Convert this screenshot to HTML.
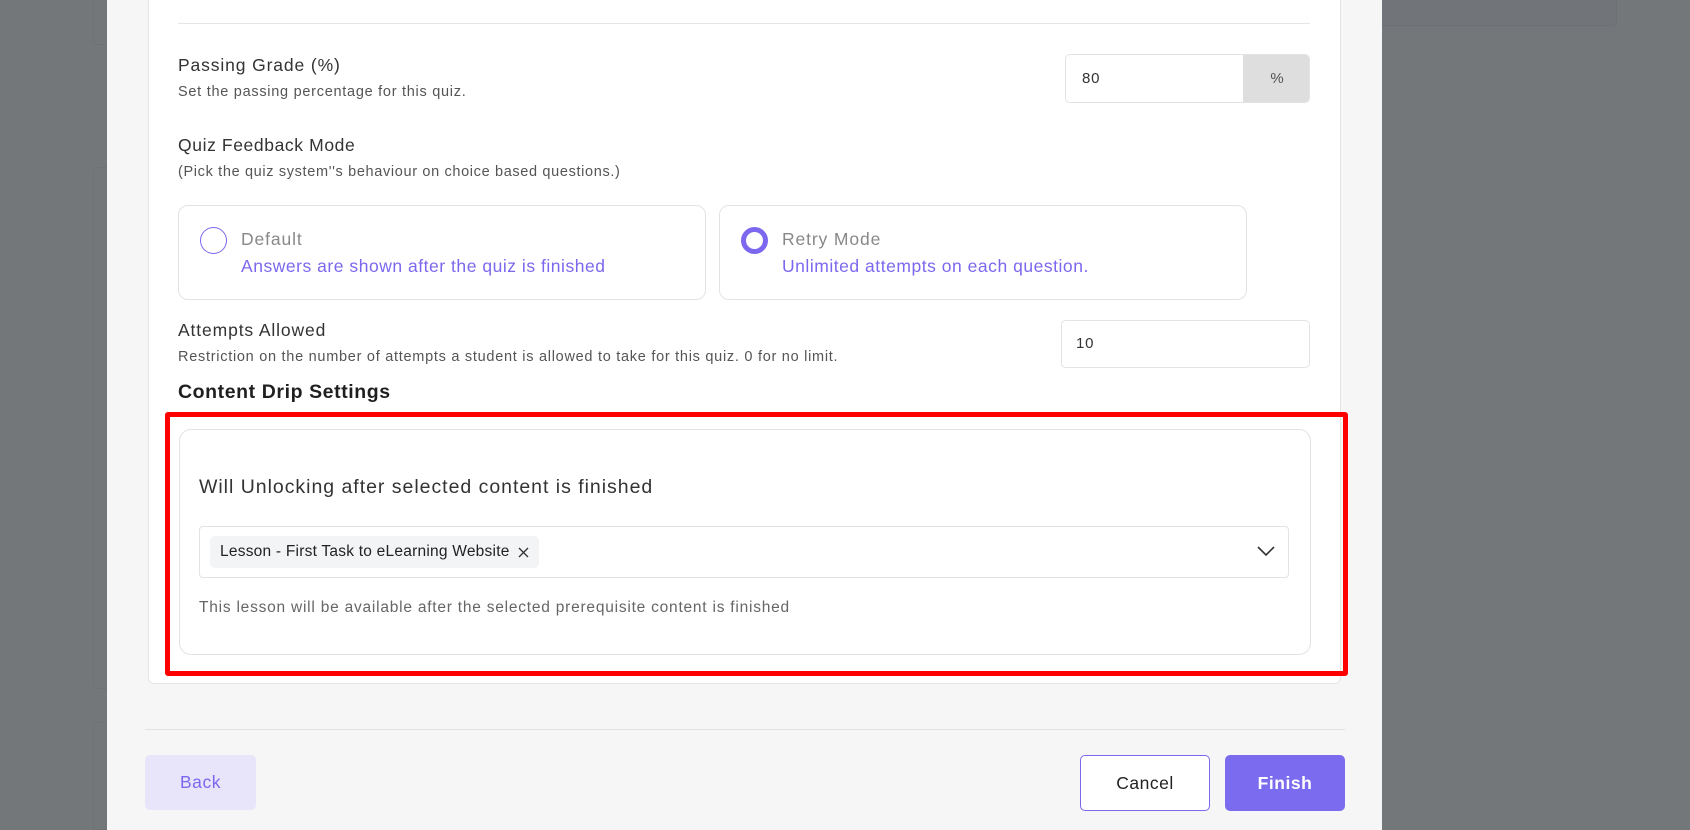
<!DOCTYPE html>
<html><head><meta charset="utf-8">
<style>
*{box-sizing:border-box;margin:0;padding:0}
html,body{width:1690px;height:830px;overflow:hidden}
body{background:#74777a;font-family:"Liberation Sans",sans-serif;position:relative;color:#1f2937}
.abs{position:absolute}
.modal{left:107px;top:0;width:1275px;height:830px;background:#f6f6f6}
.card{left:148px;top:-10px;width:1193px;height:694px;background:#fff;border:1px solid #e5e5e5;border-radius:6px}
.t{position:absolute;white-space:nowrap;letter-spacing:0.05em}
.h{font-size:17.5px;color:#333}
.s{font-size:14.5px;color:#555}
.inp{position:absolute;border:1px solid #e3e3e3;border-radius:5px;background:#fff;font-size:15px;color:#333}
.rc{position:absolute;border:1px solid #e3e3e3;border-radius:10px;background:#fff}
.btn{position:absolute;border-radius:5px;font-size:17.5px;display:flex;align-items:center;justify-content:center;letter-spacing:0.03em}
</style></head><body>
<div class="abs" style="left:93px;top:-5px;width:30px;height:50px;border:1px solid #6f7275;border-radius:4px"></div>
<div class="abs" style="left:93px;top:167px;width:30px;height:522px;border:1px solid #6f7275;border-radius:4px"></div>
<div class="abs" style="left:93px;top:722px;width:30px;height:108px;border:1px solid #6f7275;border-radius:4px 4px 0 0"></div>
<div class="abs" style="left:1370px;top:-5px;width:247px;height:31px;background:#717478;border:1px solid #6d7074;border-radius:4px"></div>
<div class="abs modal"></div>
<div class="abs card"></div>
<div class="abs" style="left:178px;top:23px;width:1132px;height:1px;background:#e5e5e5"></div>

<div class="t h" style="left:178px;top:55px">Passing Grade (%)</div>
<div class="t s" style="left:178px;top:84px">Set the passing percentage for this quiz.</div>
<div class="inp" style="left:1065px;top:54px;width:245px;height:49px;overflow:hidden">
  <span class="t" style="left:16px;top:15px">80</span>
  <div class="abs" style="left:177px;top:0;width:68px;height:49px;background:#dedede;text-align:center;line-height:47px;color:#555">%</div>
</div>

<div class="t h" style="left:178px;top:135px;letter-spacing:0.035em">Quiz Feedback Mode</div>
<div class="t s" style="left:178px;top:164px;letter-spacing:0.045em">(Pick the quiz system''s behaviour on choice based questions.)</div>

<div class="rc" style="left:178px;top:205px;width:528px;height:95px">
  <div class="abs" style="left:21px;top:21px;width:27px;height:27px;border:1.5px solid #7b68ee;border-radius:50%"></div>
  <div class="t" style="left:62px;top:23px;font-size:17.5px;color:#888">Default</div>
  <div class="t" style="left:62px;top:50px;font-size:17.5px;color:#7b68ee;letter-spacing:0.03em">Answers are shown after the quiz is finished</div>
</div>
<div class="rc" style="left:719px;top:205px;width:528px;height:95px">
  <div class="abs" style="left:21px;top:21px;width:27px;height:27px;border:5px solid #7b68ee;border-radius:50%"></div>
  <div class="t" style="left:62px;top:23px;font-size:17.5px;color:#888">Retry Mode</div>
  <div class="t" style="left:62px;top:50px;font-size:17.5px;color:#7b68ee;letter-spacing:0.03em">Unlimited attempts on each question.</div>
</div>

<div class="t h" style="left:178px;top:320px">Attempts Allowed</div>
<div class="t s" style="left:178px;top:349px">Restriction on the number of attempts a student is allowed to take for this quiz. 0 for no limit.</div>
<div class="inp" style="left:1061px;top:320px;width:249px;height:48px"><span class="t" style="left:14px;top:14px">10</span></div>

<div class="t" style="left:178px;top:381px;font-size:19.5px;color:#1f1f1f;font-weight:600;letter-spacing:0.03em">Content Drip Settings</div>

<div class="abs" style="left:165px;top:412px;width:1183px;height:264px;border:5px solid #ff0000;border-radius:3px"></div>
<div class="abs" style="left:179px;top:429px;width:1132px;height:226px;border:1px solid #e3e3e3;border-radius:12px;background:#fff"></div>
<div class="t" style="left:199px;top:476px;font-size:19.5px;color:#333">Will Unlocking after selected content is finished</div>
<div class="abs" style="left:199px;top:526px;width:1090px;height:52px;border:1px solid #e3e3e3;border-radius:4px;background:#fff"></div>
<div class="abs" style="left:210px;top:536px;width:329px;height:32px;background:#f3f4f6;border-radius:5px"></div>
<div class="t" style="left:220px;top:543px;font-size:15.5px;color:#222;letter-spacing:0.015em">Lesson - First Task to eLearning Website</div>
<svg class="abs" style="left:517px;top:546px" width="13" height="13" viewBox="0 0 13 13"><path d="M2 2L11 11M11 2L2 11" stroke="#333" stroke-width="1.3"/></svg>
<svg class="abs" style="left:1256px;top:544px" width="20" height="14" viewBox="0 0 20 14"><path d="M2 3L10 11L18 3" stroke="#333" stroke-width="1.6" fill="none"/></svg>
<div class="t" style="left:199px;top:599px;font-size:15.5px;color:#666">This lesson will be available after the selected prerequisite content is finished</div>

<div class="abs" style="left:145px;top:729px;width:1200px;height:1px;background:#e2e2e2"></div>
<div class="btn" style="left:145px;top:755px;width:111px;height:55px;background:#e8e5fb;color:#7b68ee">Back</div>
<div class="btn" style="left:1080px;top:755px;width:130px;height:56px;background:#fff;border:1px solid #7b68ee;color:#222">Cancel</div>
<div class="btn" style="left:1225px;top:755px;width:120px;height:56px;background:#7b6bee;color:#fff;font-weight:bold">Finish</div>
</body></html>
